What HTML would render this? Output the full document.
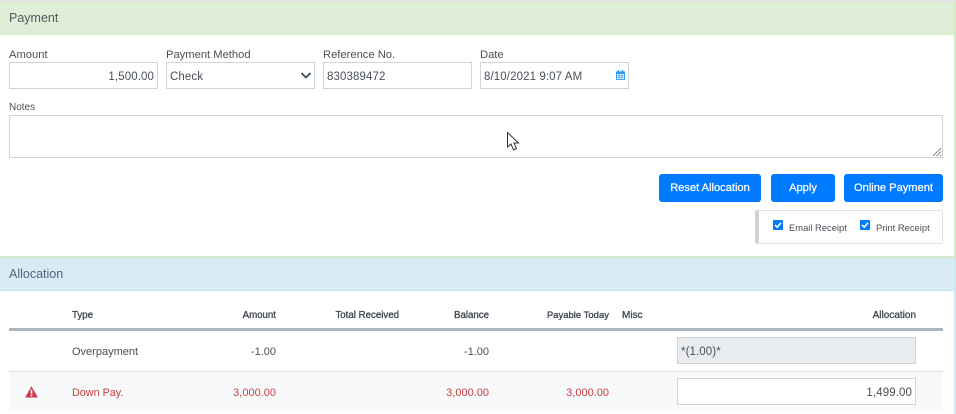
<!DOCTYPE html>
<html>
<head>
<meta charset="utf-8">
<style>
html,body{margin:0;padding:0;width:956px;height:414px;overflow:hidden;background:#fff;}
body{position:relative;font-family:"Liberation Sans",sans-serif;color:#495057;}
.a{position:absolute;box-sizing:border-box;white-space:nowrap;}
.lbl{font-size:11.2px;line-height:14px;color:#495057;top:48px;}
.inp{border:1px solid #ced4da;background:#fff;font-size:11.5px;line-height:29px;color:#495057;height:27px;padding:0 3px;letter-spacing:.1px;overflow:hidden;}
.btn{background:#007bff;color:#fff;font-size:11.1px;font-weight:normal;text-align:center;height:28px;line-height:29px;border-radius:3px;top:174px;-webkit-text-stroke:.25px #fff;}
.th{font-size:9.7px;line-height:14px;top:309px;color:#3f4650;text-align:right;-webkit-text-stroke:.3px #3f4650;}
.td{font-size:11px;line-height:14px;color:#495057;}
.r{text-align:right;}
.red{color:#c9403f;}
.cb{width:10px;height:10px;background:#007bff;border-radius:1px;}
</style>
</head>
<body>
<!-- Payment header -->
<div class="a" style="left:0;top:0;width:956px;height:2px;background:#e3e3e3;"></div>
<div class="a" style="left:0;top:2px;width:956px;height:33px;background:#dfeed6;"></div>
<div class="a" style="left:0;top:34px;width:956px;height:1px;background:#d6e9c6;"></div>
<div class="a" style="left:9px;top:11px;font-size:12.5px;line-height:14px;color:#4f5b66;">Payment</div>
<div class="a" style="left:954px;top:2px;width:2px;height:255px;background:#d6e9c6;"></div>

<!-- Fields -->
<div class="a lbl" style="left:9px;">Amount</div>
<div class="a lbl" style="left:166px;">Payment Method</div>
<div class="a lbl" style="left:323px;">Reference No.</div>
<div class="a lbl" style="left:480px;">Date</div>

<div class="a inp" style="left:9px;top:62px;width:149px;text-align:right;">1,500.00</div>
<div class="a inp" style="left:166px;top:62px;width:149px;">Check</div>
<svg class="a" style="left:300px;top:71px;" width="12" height="9" viewBox="0 0 12 9"><path d="M1.5 2 L6 6.5 L10.5 2" fill="none" stroke="#3f4a5a" stroke-width="1.8"/></svg>
<div class="a inp" style="left:323px;top:62px;width:149px;">830389472</div>
<div class="a inp" style="left:480px;top:62px;width:149px;">8/10/2021 9:07 AM</div>
<svg class="a" style="left:615.5px;top:70px;" width="9" height="10" viewBox="0 0 10 11"><rect x="0.5" y="3.5" width="9" height="7" fill="#fff" stroke="#2d9cf4" stroke-width="1"/><rect x="0" y="1.5" width="10" height="3" fill="#2d9cf4"/><rect x="2" y="0" width="1.5" height="2.5" fill="#2d9cf4"/><rect x="6.5" y="0" width="1.5" height="2.5" fill="#2d9cf4"/><path d="M0 6.5H10M0 8.5H10M3.5 4V11M6.5 4V11" stroke="#2d9cf4" stroke-width=".8"/></svg>

<!-- Notes -->
<div class="a" style="left:9px;top:102px;font-size:10px;line-height:12px;color:#495057;">Notes</div>
<div class="a" style="left:9px;top:115px;width:934px;height:43px;border:1px solid #ced4da;background:#fff;"></div>
<svg class="a" style="left:932px;top:147px;" width="10" height="10" viewBox="0 0 10 10"><path d="M1 9 L9 1 M4.5 9 L9 4.5 M8 9 L9 8" stroke="#666" stroke-width=".8" fill="none"/></svg>
<!-- cursor -->
<svg class="a" style="left:506px;top:131px;" width="14" height="21" viewBox="0 0 14 21"><path d="M1.5 1.5 L1.5 16 L5 13 L7.5 19 L10.5 17.5 L8 12 L12.5 12 Z" fill="#fff" stroke="#333" stroke-width="1"/></svg>

<!-- Buttons -->
<div class="a btn" style="left:659px;width:102px;">Reset Allocation</div>
<div class="a btn" style="left:771px;width:64px;">Apply</div>
<div class="a btn" style="left:844px;width:99px;">Online Payment</div>

<!-- Checkbox panel -->
<div class="a" style="left:755px;top:210px;width:188px;height:34px;border:1px solid #dee2e6;border-left:4px solid #ced4da;border-radius:2px;background:#fff;"></div>
<svg class="a cb" style="left:773px;top:220px;" viewBox="0 0 10 10"><path d="M2 5 L4.2 7.2 L8 2.8" fill="none" stroke="#fff" stroke-width="1.6"/></svg>
<div class="a" style="left:789px;top:221px;font-size:9.4px;line-height:14px;color:#495057;">Email Receipt</div>
<svg class="a cb" style="left:860px;top:220px;" viewBox="0 0 10 10"><path d="M2 5 L4.2 7.2 L8 2.8" fill="none" stroke="#fff" stroke-width="1.6"/></svg>
<div class="a" style="left:876px;top:221px;font-size:9.4px;line-height:14px;color:#495057;">Print Receipt</div>

<!-- Allocation header -->
<div class="a" style="left:0;top:256px;width:956px;height:2px;background:#d6e9c6;"></div>
<div class="a" style="left:0;top:258px;width:956px;height:33px;background:#d9ecf5;"></div>
<div class="a" style="left:0;top:290px;width:956px;height:1px;background:#bce8f1;"></div>
<div class="a" style="left:9px;top:267px;font-size:12.5px;line-height:14px;color:#4f6478;">Allocation</div>
<div class="a" style="left:954px;top:258px;width:2px;height:156px;background:#cfe9f1;"></div>

<!-- Table header -->
<div class="a th" style="left:72px;">Type</div>
<div class="a th" style="left:176px;width:100px;">Amount</div>
<div class="a th" style="left:299px;width:100px;">Total Received</div>
<div class="a th" style="left:389px;width:100px;">Balance</div>
<div class="a th" style="left:509px;width:100px;font-size:9.5px;">Payable Today</div>
<div class="a th" style="left:622px;font-size:10px;">Misc</div>
<div class="a th" style="left:816px;width:100px;font-size:10px;">Allocation</div>
<div class="a" style="left:9px;top:328px;width:934px;height:3px;background:#adb5bd;"></div>

<!-- Row 1 -->
<div class="a td" style="left:72px;top:345px;">Overpayment</div>
<div class="a td r" style="left:176px;top:345px;width:100px;">-1.00</div>
<div class="a td r" style="left:389px;top:345px;width:100px;">-1.00</div>
<div class="a inp" style="left:677px;top:337px;width:239px;background:#e9ecef;padding:0 3px;">*(1.00)*</div>
<div class="a" style="left:9px;top:371px;width:934px;height:1px;background:#dee2e6;"></div>

<!-- Row 2 -->
<div class="a" style="left:9px;top:372px;width:934px;height:40px;background:#f8f9fa;"></div>
<svg class="a" style="left:25px;top:386px;" width="13" height="12" viewBox="0 0 13 12"><path d="M6.5 0.3 L12.9 11.5 L0.1 11.5 Z" fill="#cb3a48"/><rect x="5.7" y="3.6" width="1.6" height="4.2" fill="#fff"/><rect x="5.7" y="8.7" width="1.6" height="1.6" fill="#fff"/></svg>
<div class="a td red" style="left:72px;top:386px;font-size:10.8px;">Down Pay.</div>
<div class="a td r red" style="left:176px;top:386px;width:100px;">3,000.00</div>
<div class="a td r red" style="left:389px;top:386px;width:100px;">3,000.00</div>
<div class="a td r red" style="left:509px;top:386px;width:100px;">3,000.00</div>
<div class="a inp" style="left:677px;top:378px;width:239px;text-align:right;">1,499.00</div>
</body>
</html>
